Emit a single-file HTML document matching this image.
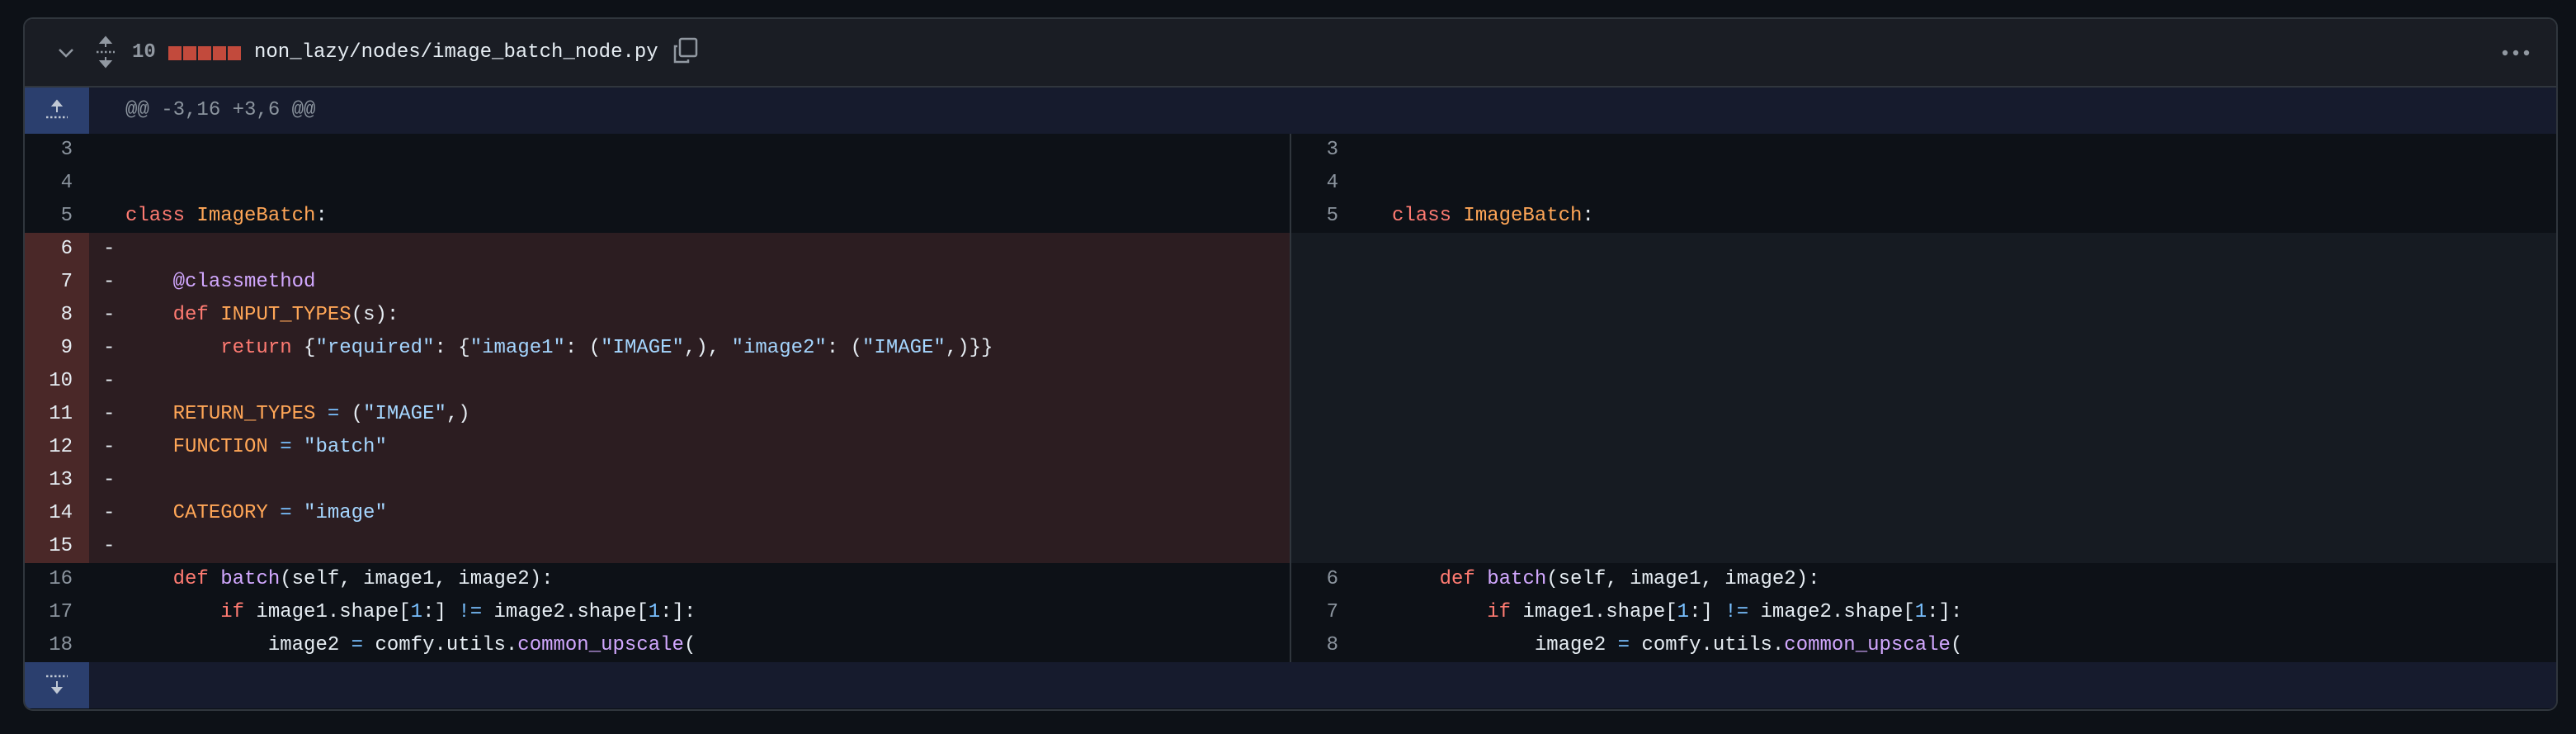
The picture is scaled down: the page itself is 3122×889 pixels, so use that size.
<!DOCTYPE html>
<html><head><meta charset="utf-8"><style>
body{margin:0;width:3122px;height:889px;background:#0d1117;overflow:hidden;font-family:"Liberation Mono",monospace;}
.box{position:absolute;left:28px;top:21px;width:3068px;height:836px;border:2px solid #30363d;border-radius:12px;overflow:hidden;background:#0d1117;}
.hdr{position:absolute;left:0;top:0;right:0;height:81px;background:#1a1d24;border-bottom:2px solid #30363d;}
.hdr .t{position:absolute;top:23px;font-size:24px;line-height:36px;}
.hunk{position:absolute;left:0;right:0;height:56px;background:#161b2d;}
.hunk .g{position:absolute;left:0;top:0;width:78px;height:56px;background:#2b3f6e;}
.row{position:absolute;left:0;right:0;height:40px;font-size:24px;line-height:40px;color:#e6edf3;white-space:pre;}
.n{position:absolute;text-align:right;color:#8b949e;width:50px;}
.c{position:absolute;}
.k{color:#ff7b72}.f{color:#ffa657}.p{color:#d2a8ff}.s{color:#a5d6ff}.b{color:#79c0ff}
</style></head><body>
<div class="box">
<div class="hdr">
 <svg style="position:absolute;left:37px;top:28px" width="26" height="26" viewBox="0 0 26 26"><path d="M5 9l8 8 8-8" fill="none" stroke="#9198a1" stroke-width="2.5"/></svg>
 <svg style="position:absolute;left:83px;top:20px" width="30" height="40" viewBox="0 0 30 40"><path d="M15 2l-6 7h12z M15 38l-6-7h12z M15 8v6 M15 26v6" fill="#9198a1" stroke="#9198a1" stroke-width="2"/><path d="M4 20h22" stroke="#9198a1" stroke-width="2.5" stroke-dasharray="2.5 2.5"/></svg>
 <div class="t" style="left:130px;color:#9198a1;font-weight:bold;">10</div>
 <div style="position:absolute;left:174px;top:33px;width:88px;height:17px;background:repeating-linear-gradient(90deg,#c24a3c 0 16px,transparent 16px 18px)"></div>
 <div class="t" style="left:278px;color:#e6edf3;">non_lazy/nodes/image_batch_node.py</div>
 <svg style="position:absolute;left:784px;top:22px" width="34" height="34" viewBox="0 0 34 34"><rect x="10" y="2" width="20" height="21" rx="2" fill="none" stroke="#9198a1" stroke-width="2.5"/><path d="M7 11H4v19h16v-3" fill="none" stroke="#9198a1" stroke-width="2.5"/></svg>
 <svg style="position:absolute;left:2998px;top:34px" width="40" height="14"><circle cx="8" cy="7" r="3.2" fill="#9198a1"/><circle cx="21" cy="7" r="3.2" fill="#9198a1"/><circle cx="34" cy="7" r="3.2" fill="#9198a1"/></svg>
</div>
<div class="hunk" style="top:83px"><div class="g"><svg style="position:absolute;left:24px;top:14px" width="30" height="28"><path d="M15 2l-5 6h10z M15 7v9" fill="#c0c8d4" stroke="#c0c8d4" stroke-width="2"/><path d="M2 22h26" stroke="#c0c8d4" stroke-width="2.5" stroke-dasharray="2.5 2.5"/></svg></div>
<div style="position:absolute;left:122px;top:8px;font-size:24px;line-height:40px;color:#8b949e;">@@ -3,16 +3,6 @@</div></div>
<div style="position:absolute;left:0;top:139px;right:0;height:640px;">
<div style="position:absolute;left:1533px;top:0;width:2px;height:640px;background:#30363d;z-index:2"></div>
<div style="position:absolute;left:0;top:120px;width:78px;height:400px;background:#4a2828"></div>
<div style="position:absolute;left:78px;top:120px;width:1455px;height:400px;background:#2c1d21"></div>
<div style="position:absolute;left:1535px;top:120px;right:0;height:400px;background:#161b22"></div>
<div class="row" style="top:0"><span class="n" style="left:8px">3</span><span class="n" style="left:1542px">3</span></div>
<div class="row" style="top:40px"><span class="n" style="left:8px">4</span><span class="n" style="left:1542px">4</span></div>
<div class="row" style="top:80px"><span class="n" style="left:8px">5</span><span class="c" style="left:122px"><span class="k">class</span> <span class="f">ImageBatch</span>:</span><span class="n" style="left:1542px">5</span><span class="c" style="left:1657px"><span class="k">class</span> <span class="f">ImageBatch</span>:</span></div>
<div class="row" style="top:120px"><span class="n" style="left:8px;color:#e6edf3">6</span><span class="c" style="left:95px">-</span></div>
<div class="row" style="top:160px"><span class="n" style="left:8px;color:#e6edf3">7</span><span class="c" style="left:95px">-</span><span class="c" style="left:122px">    <span class="p">@classmethod</span></span></div>
<div class="row" style="top:200px"><span class="n" style="left:8px;color:#e6edf3">8</span><span class="c" style="left:95px">-</span><span class="c" style="left:122px">    <span class="k">def</span> <span class="f">INPUT_TYPES</span>(s):</span></div>
<div class="row" style="top:240px"><span class="n" style="left:8px;color:#e6edf3">9</span><span class="c" style="left:95px">-</span><span class="c" style="left:122px">        <span class="k">return</span> {<span class="s">"required"</span>: {<span class="s">"image1"</span>: (<span class="s">"IMAGE"</span>,), <span class="s">"image2"</span>: (<span class="s">"IMAGE"</span>,)}}</span></div>
<div class="row" style="top:280px"><span class="n" style="left:8px;color:#e6edf3">10</span><span class="c" style="left:95px">-</span></div>
<div class="row" style="top:320px"><span class="n" style="left:8px;color:#e6edf3">11</span><span class="c" style="left:95px">-</span><span class="c" style="left:122px">    <span class="f">RETURN_TYPES</span> <span class="b">=</span> (<span class="s">"IMAGE"</span>,)</span></div>
<div class="row" style="top:360px"><span class="n" style="left:8px;color:#e6edf3">12</span><span class="c" style="left:95px">-</span><span class="c" style="left:122px">    <span class="f">FUNCTION</span> <span class="b">=</span> <span class="s">"batch"</span></span></div>
<div class="row" style="top:400px"><span class="n" style="left:8px;color:#e6edf3">13</span><span class="c" style="left:95px">-</span></div>
<div class="row" style="top:440px"><span class="n" style="left:8px;color:#e6edf3">14</span><span class="c" style="left:95px">-</span><span class="c" style="left:122px">    <span class="f">CATEGORY</span> <span class="b">=</span> <span class="s">"image"</span></span></div>
<div class="row" style="top:480px"><span class="n" style="left:8px;color:#e6edf3">15</span><span class="c" style="left:95px">-</span></div>
<div class="row" style="top:520px"><span class="n" style="left:8px">16</span><span class="c" style="left:122px">    <span class="k">def</span> <span class="p">batch</span>(self, image1, image2):</span><span class="n" style="left:1542px">6</span><span class="c" style="left:1657px">    <span class="k">def</span> <span class="p">batch</span>(self, image1, image2):</span></div>
<div class="row" style="top:560px"><span class="n" style="left:8px">17</span><span class="c" style="left:122px">        <span class="k">if</span> image1.shape[<span class="b">1</span>:] <span class="b">!=</span> image2.shape[<span class="b">1</span>:]:</span><span class="n" style="left:1542px">7</span><span class="c" style="left:1657px">        <span class="k">if</span> image1.shape[<span class="b">1</span>:] <span class="b">!=</span> image2.shape[<span class="b">1</span>:]:</span></div>
<div class="row" style="top:600px"><span class="n" style="left:8px">18</span><span class="c" style="left:122px">            image2 <span class="b">=</span> comfy.utils.<span class="p">common_upscale</span>(</span><span class="n" style="left:1542px">8</span><span class="c" style="left:1657px">            image2 <span class="b">=</span> comfy.utils.<span class="p">common_upscale</span>(</span></div>
</div>
<div class="hunk" style="top:779px"><div class="g"><svg style="position:absolute;left:24px;top:12px" width="30" height="28"><path d="M2 5h26" stroke="#c0c8d4" stroke-width="2.5" stroke-dasharray="2.5 2.5"/><path d="M15 25l-5-6h10z M15 11v9" fill="#c0c8d4" stroke="#c0c8d4" stroke-width="2"/></svg></div></div>
</div>
</body></html>
